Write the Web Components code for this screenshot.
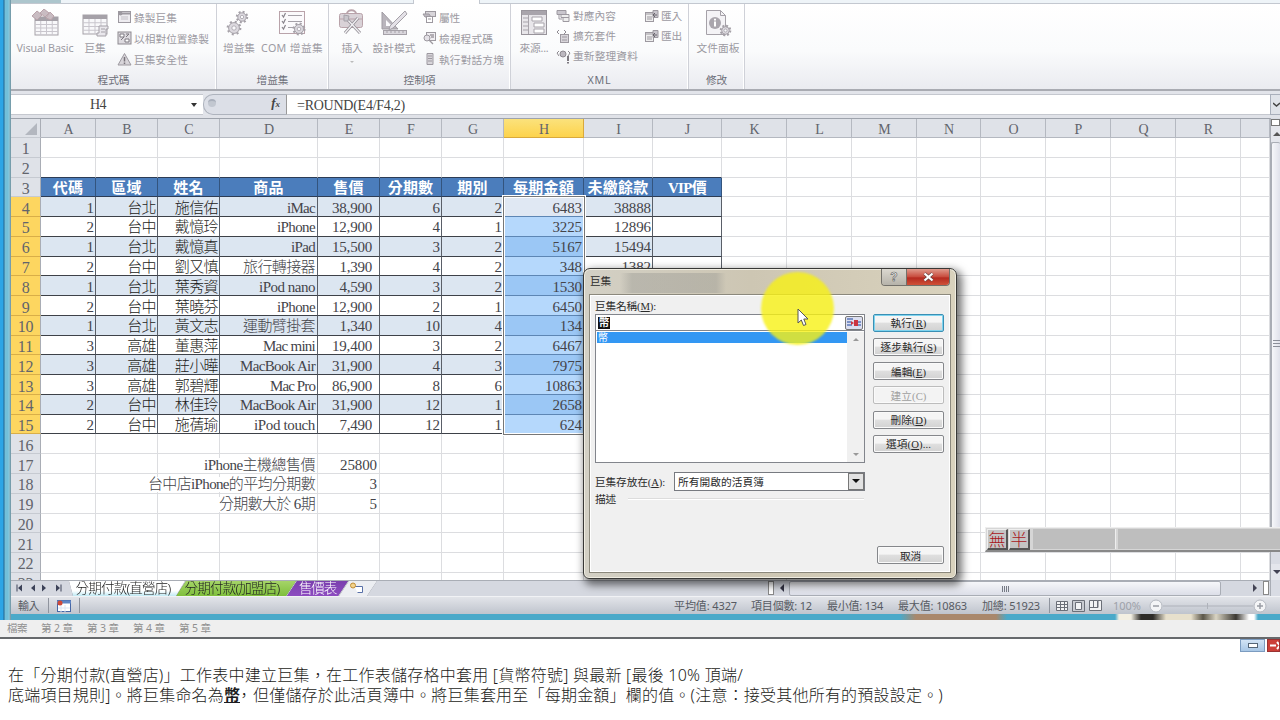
<!DOCTYPE html>
<html lang="zh-Hant">
<head>
<meta charset="utf-8">
<title>巨集</title>
<style>
html,body{margin:0;width:1280px;height:720px;overflow:hidden;background:#fff}
body{font-family:"Noto Sans","Noto Sans CJK TC",sans-serif}
</style>
</head>
<body>
<app-desktop></app-desktop>
<script>
const fits = [];
const define = (name, css, render) => customElements.define(name, class extends HTMLElement {
  constructor() {
    super();
    this.attachShadow({ mode: 'open' });
  }
  connectedCallback() {
    if (this.done) return;
    this.done = true;
    this.shadowRoot.innerHTML = `<style>*{box-sizing:border-box}:host{box-sizing:border-box}${css}</style>${render(this)}`;
  }
});

/* Text set to a given width by tracking */
customElements.define('fit-text', class extends HTMLElement {
  constructor() {
    super();
    this.attachShadow({ mode: 'open' }).innerHTML =
      '<style>:host{display:inline-block;white-space:pre;flex:none}span{display:inline-block;white-space:pre}</style><span><slot></slot></span>';
  }
  connectedCallback() { fits.push(this); }
  fit() {
    const w = +this.getAttribute('w');
    const n = [...this.textContent].length;
    const s = this.shadowRoot.querySelector('span');
    const nat = s.getBoundingClientRect().width;
    if (w && n) {
      s.style.letterSpacing = ((w - nat) / n) + 'px';
      this.style.width = w + 'px';
    }
  }
});
const T = (s, w, x = '') => `<fit-text w="${w}" style="${x}">${s}</fit-text>`;

/* ---------- icons ---------- */
const G = '#a5a1a8', L = '#e9e7ec', P = '#b9a3aa';
const gear = (x, y, r) => `<circle cx="${x}" cy="${y}" r="${r}" fill="#dcd9df" stroke="${G}" stroke-width="1"/><circle cx="${x}" cy="${y}" r="${r + 1}" fill="none" stroke="${G}" stroke-width="2" stroke-dasharray="2 ${(2 * Math.PI * (r + 1) / 8 - 2).toFixed(2)}"/><circle cx="${x}" cy="${y}" r="${r * .4}" fill="#fafafc" stroke="${G}" stroke-width=".8"/>`;
const grid = (x, y, w, h) => {
  let s = `<rect x="${x}" y="${y}" width="${w}" height="${h}" fill="#f8f8fa" stroke="${G}"/><rect x="${x}" y="${y}" width="${w}" height="4" fill="${G}"/>`;
  for (let i = 1; i < 4; i++) s += `<path d="M${x} ${y + 4 + i * (h - 4) / 4}h${w}M${x + i * w / 4} ${y + 4}v${h - 4}" stroke="#c9c6cd" fill="none"/>`;
  return s;
};
const ICON = {
  vb: grid(4, 8, 23, 18) + `<path d="M1 7l5-5 5 4-5 5zM9 4l4-4 5 4-4 4zM15 9l4-6 4 4-3 4z" fill="#c9bcc2" stroke="${P}"/>`,
  macro: grid(2, 6, 24, 19) + `<path d="M18 17h9v3h-2v7h-9v-3h2z" fill="${L}" stroke="${G}"/><path d="M20 20h4M20 23h4" stroke="${G}"/>`,
  gears: gear(17, 8, 4.2) + gear(9, 19, 5.4),
  com: `<rect x="1.500" y="2.500" width="25" height="22" fill="#fbfafc" stroke="${P}"/><path d="M10 6.500h14M10 12.500h14M10 18.500h8" stroke="${G}"/><path d="M4 6l1.500 2 2-4M4 12l1.500 2 2-4M4 18l1.500 2 2-4" stroke="#88848c" fill="none" stroke-width="1.200"/>` + gear(21, 20, 4.5),
  insert: `<path d="M9 5c0-5 9-5 9 0" fill="none" stroke="${P}" stroke-width="2"/><rect x="1.500" y="4.500" width="23" height="14" rx="2" fill="#d9d2d7" stroke="${P}"/><path d="M2 10h22" stroke="${P}"/><path d="M8 9l14 15M20 9L7 24" stroke="#97939a" stroke-width="3"/><path d="M8 9l14 15M20 9L7 24" stroke="#f3f2f5" stroke-width="1.200"/><path d="M6 6l5 1-1 5-4 0z" fill="#c8c5cb" stroke="${G}"/>`,
  design: `<path d="M2 3v17h16z" fill="#b9b5bc" stroke="#a09ca3"/><path d="M6 11v6h6z" fill="#fafafc"/><path d="M25 2l2 3-14 14-4 2 1-4z" fill="#e4e1e7" stroke="${G}"/><rect x="3.500" y="21.500" width="23" height="4" fill="#d9d6dc" stroke="${G}"/><path d="M7 22v2M11 22v2M15 22v2M19 22v2M23 22v2" stroke="${G}"/>`,
  source: `<rect x="1.500" y="1.500" width="25" height="24" fill="#e8e6ea" stroke="#98949b"/><rect x="2" y="2" width="24" height="4" fill="#a8a4ab"/><path d="M8.500 6v19M3 9h5M3 13h5M3 17h5M3 21h5" stroke="#a8a4ab"/><path d="M12 8h10v4H12zM14 14h10v4H14zM14 20h10v4H14z" fill="#fff" stroke="#a8a4ab"/>`,
  doc: `<path d="M2.500 1.500h14l5 5v19h-19z" fill="#f4f3f6" stroke="${G}"/><path d="M16.500 1.500v5h5" fill="none" stroke="${G}"/><circle cx="11" cy="14" r="6" fill="#aaa6ad"/><path d="M11 12.500v5M11 9.800v1.600" stroke="#fff" stroke-width="2"/>` + gear(21.500, 21.500, 3.800),
  rec: `<rect x="1.500" y="1.500" width="12" height="11" fill="#eeecf0" stroke="#9d99a0"/><path d="M2 3.500h11" stroke="#9d99a0" stroke-width="2"/><path d="M4 7h7M4 9h7" stroke="#c3c0c7"/><circle cx="3.500" cy="3.500" r="2" fill="#9d99a0"/>`,
  rel: `<rect x="1" y="1" width="13" height="12" fill="#dddadf" stroke="#8d8990"/><path d="M3 3h4v3H3zM8 8h4v3H8zM9 3h3M4 9l3-3M9 6l3-3" stroke="#7d7980" fill="#fff"/>`,
  warn: `<path d="M7.500 1.500l6.500 11.500H1z" fill="#d8d5da" stroke="#9d99a0"/><path d="M7.500 5v4.500M7.500 10.500v1.500" stroke="#77737a" stroke-width="1.500"/>`,
  prop: `<rect x="3.500" y="1.500" width="10" height="5" fill="#d8d5da" stroke="#9d99a0"/><path d="M1 4h6l2 3H3z" fill="#bcb8c0" stroke="#9d99a0"/><rect x="4.500" y="6.500" width="6" height="6" fill="#fff" stroke="#9d99a0"/><path d="M6 9h3" stroke="#9d99a0"/>`,
  view: `<rect x="4.500" y="1.500" width="9" height="8" fill="#f0eef2" stroke="#9d99a0"/><circle cx="5" cy="7" r="3" fill="#e4e1e7" stroke="#9d99a0"/><path d="M7 9l4 4M8 4h4M9 6h3" stroke="#9d99a0" stroke-width="1.300"/>`,
  run: `<path d="M5 1.500h6v11H5z" fill="#d8d5da" stroke="#9d99a0"/><path d="M6 4h4M6 6.500h4M6 9h4" stroke="#9d99a0"/>`,
  map: `<path d="M1 1.500h9v4H1z" fill="#c9c6cd" stroke="#9d99a0"/><path d="M5 5.500h8v3H5zM7 8.500h6v4H7z" fill="#eee" stroke="#9d99a0"/><path d="M3 6v4h3" fill="none" stroke="#9d99a0"/>`,
  ext: `<path d="M3 1L1 3l2 2M8 1l2 2-2 2" fill="none" stroke="#8d8990"/><rect x="4.500" y="5.500" width="8" height="8" fill="#d8d5da" stroke="#9d99a0"/><path d="M6 8h5M6 11h5" stroke="#9d99a0"/>`,
  refr: `<path d="M3 2L1 4l2 3M12 2l2 2-2 3" fill="none" stroke="#8d8990"/><circle cx="7" cy="5" r="3" fill="#bcb8c0" stroke="#8d8990"/><path d="M12 7v5M12 13v1.500" stroke="#7d7980" stroke-width="2"/>`,
  imp: `<rect x="1.500" y="3.500" width="8" height="9" fill="#eee" stroke="#9d99a0"/><path d="M2 5h7M3 8h5M3 10h5" stroke="#9d99a0"/><path d="M9 1.500h5v7H9z" fill="#c9c6cd" stroke="#9d99a0"/><path d="M10 6l3 0M11 4l-2 2 2 2" fill="none" stroke="#66626a"/>`
};
const I = (n, w, x = '') => `<svg width="${w}" height="${w}" viewBox="0 0 ${n === 'imp' || w > 20 ? w : w} ${w}" style="${x}">${ICON[n]}</svg>`;

/* ---------- ribbon ---------- */
define('big-button',
  `:host{display:flex;flex-direction:column;align-items:center;width:var(--w);flex:none;padding-top:5px;color:#9c9aa2;font-size:10.7px;line-height:16px}
   svg{display:block;margin-bottom:3px}i{width:0;height:0;border:2.500px solid transparent;border-top-color:#bbb;margin-top:5px}`,
  e => `${I(e.getAttribute('icon'), 28)}${T(e.getAttribute('label'), e.getAttribute('w'))}${e.hasAttribute('menu') ? '<i></i>' : ''}`);
define('small-button',
  `:host{display:flex;align-items:center;height:var(--h,21px);color:#9c9aa2;font-size:10.7px;line-height:16px}svg{margin-right:2px;flex:none}`,
  e => `${I(e.getAttribute('icon'), 15)}${T(e.getAttribute('label'), e.getAttribute('w'))}`);
define('ribbon-group',
  `:host{display:flex;flex-direction:column;width:var(--w);height:85px;flex:none;border-right:1px solid #cfd1d8;box-shadow:inset -1px 0 #fff}
   .b{display:flex;height:68px;flex:none}.l{text-align:center;font-size:10.7px;line-height:16px;color:#6c6e78;display:flex;justify-content:center}`,
  e => `<div class="b"><slot></slot></div><div class="l">${T(e.getAttribute('label'), e.getAttribute('w'))}</div>`);
const big = (i, l, w, W, m = 0, x = '') => `<big-button icon="${i}" label="${l}" w="${w}" ${x} style="--w:${W}px;margin-left:${m}px"></big-button>`;
const sm = (i, l, w) => `<small-button icon="${i}" label="${l}" w="${w}"></small-button>`;
define('ribbon-bar',
  `:host{display:block;height:89px;flex:none}
   .tabs{display:flex;height:4px;background:#eef4f8;border-bottom:1px solid #c3c8d0}.f{width:50px;background:#adc6cd}.a{margin-left:352px;width:67px;background:#fff;border:1px solid #c3c8d0;border-width:0 1px;margin-bottom:-1px}
   .g{display:flex;height:85px;background:linear-gradient(#fff,#fafbfc 55%,#eaebf0)}
   .c{display:flex;flex-direction:column}`,
  () => `<div class="tabs"><div class="f"></div><div class="a"></div></div><div class="g">
  <ribbon-group label="程式碼" w="32" style="--w:206px">${big('vb', 'Visual Basic', 57, 60, 4)}${big('macro', '巨集', 21, 30, 5)}<div class="c" style="margin:3px 0 0 7px">${sm('rec', '錄製巨集', 43)}${sm('rel', '以相對位置錄製', 75)}${sm('warn', '巨集安全性', 54)}</div></ribbon-group>
  <ribbon-group label="增益集" w="32" style="--w:112px">${big('gears', '增益集', 32, 36, 4)}${big('com', 'COM 增益集', 62, 64, 3)}</ribbon-group>
  <ribbon-group label="控制項" w="32" style="--w:182px">${big('insert', '插入', 21, 30, 8, 'menu')}${big('design', '設計模式', 43, 44, 5)}<div class="c" style="margin:3px 0 0 6px">${sm('prop', '屬性', 21)}${sm('view', '檢視程式碼', 54)}${sm('run', '執行對話方塊', 65)}</div></ribbon-group>
  <ribbon-group label="XML" w="24" style="--w:178px">${big('source', '來源...', 29, 32, 7)}<div class="c" style="margin:2px 0 0 6px;--h:20px">${sm('map', '對應內容', 43)}${sm('ext', '擴充套件', 43)}${sm('refr', '重新整理資料', 65)}</div><div class="c" style="margin:2px 0 0 6px;--h:20px">${sm('imp', '匯入', 21)}${sm('imp', '匯出', 21)}</div></ribbon-group>
  <ribbon-group label="修改" w="21" style="--w:56px">${big('doc', '文件面板', 43, 44, 7)}</ribbon-group></div>`);

/* ---------- formula bar ---------- */
define('formula-bar',
  `:host{display:flex;height:29px;flex:none;border-top:2px solid #a9abb2;border-bottom:3px solid #e0e2e8;padding-top:3px;background:#e2e4ea;font:14px "Liberation Serif","Noto Sans CJK TC",serif;color:#444}
   .n{width:192px;background:#fff;display:flex;align-items:center;padding-left:79px;border-top:1px solid #c5c8cf;border-bottom:1px solid #c5c8cf}
   .n i{border:3px solid transparent;border-top:4px solid #333;margin:4px 0 0 85px}
   .m{width:84px;background:#dcdfe7;border-radius:10px 0 0 10px;border:1px solid #aeb3bd;border-right-color:#999;display:flex;align-items:center;justify-content:space-between;padding:0 6px 3px 4px;font:italic bold 13px "Liberation Serif",serif}
   .m b{width:8px;height:8px;border-radius:50%;background:#c2c7d0;border-top:2px solid #a9afbb}
   small{font-size:9px}.v{flex:1;background:#fff;border-top:1px solid #c5c8cf;border-bottom:1px solid #c5c8cf;padding-left:10px;line-height:21px}
   .e{width:10px;background:#e0e3e9;border:1px solid #a9afbb;border-right:0;overflow:hidden}svg{display:block;margin:7px 0 0 2px}`,
  () => `<div class="n">${T('H4', 16)}<i></i></div><div class="m"><b></b><span>f<small>x</small></span></div><div class="v">${T('=ROUND(E4/F4,2)', 108)}</div><div class="e"><svg width="8" height="6"><path d="M0 1l3.500 3L7 1" fill="none" stroke="#444" stroke-width="1.500"/></svg></div>`);

/* ---------- worksheet ---------- */
const EDGE = [11, 41, 96, 158, 220, 318, 380, 442, 504, 584, 653, 722, 787, 852, 917, 981, 1046, 1111, 1176, 1241, 1270];
const COLS = EDGE.slice(1).map((x, i) => (x - EDGE[i]) + 'px').join(' ');
const NAMES = ['iMac', 'iPhone', 'iPad', '旅行轉接器', 'iPod nano', 'iPhone', '運動臂掛套', 'Mac mini', 'MacBook Air', 'Mac Pro', 'MacBook Air', 'iPod touch'];
const NW = [28, 38, 24, 72, 56, 38, 72, 52, 75, 45, 75, 61];
const DATA = [
  [1, '台北', '施信佑', '38,900', 6, 2, 6483, 38888], [2, '台中', '戴憶玲', '12,900', 4, 1, 3225, 12896],
  [1, '台北', '戴憶真', '15,500', 3, 2, 5167, 15494], [2, '台中', '劉又慎', '1,390', 4, 2, 348, 1382],
  [1, '台北', '葉秀資', '4,590', 3, 2, 1530, ''], [2, '台中', '葉曉芬', '12,900', 2, 1, 6450, ''],
  [1, '台北', '黃文志', '1,340', 10, 4, 134, ''], [3, '高雄', '董惠萍', '19,400', 3, 2, 6467, ''],
  [3, '高雄', '莊小曄', '31,900', 4, 3, 7975, ''], [3, '高雄', '郭碧輝', '86,900', 8, 6, 10863, ''],
  [2, '台中', '林佳玲', '31,900', 12, 1, 2658, ''], [2, '台中', '施蒨瑜', '7,490', 12, 1, 624, '']];
const num = v => v === '' ? '' : T(v, String(v).replace(',', '').length * 7.4 + (String(v).includes(',') ? 3 : 0));
const cjk = v => T(v, v.length * 14.4, 'color:#1c1c20');
const row = (n, cells, cls = '') => {
  let s = `<div class="r ${cls}"><div class="h">${n === '' ? '' : T(n, String(n).length * 7.7)}</div>`;
  for (let i = 0; i < 19; i++) s += `<div class="c c${i}">${cells[i] || ''}</div>`;
  return s + '</div>';
};
define('work-sheet',
  `:host{display:block;height:462px;width:1259px;flex:none;overflow:hidden;position:relative;font:15px/19px "Liberation Serif","Noto Sans CJK TC",serif;font-weight:300;color:#44444a;background:#fff}
   .r{display:grid;grid-template-columns:${COLS};grid-template-rows:100%;height:19.780px}
   .c{border-right:1px solid #dcdde0;border-bottom:1px solid #dcdde0;display:flex;justify-content:flex-end;align-items:center;padding:3px 1px 0 0;overflow:hidden;white-space:nowrap;min-width:0}
   .h{background:#dfe2e8;border-right:1px solid #a9adb5;border-bottom:1px solid #c6cad1;display:flex;justify-content:center;align-items:center;color:#62646c;font-size:16px;padding-top:3px}
   .top{height:20px;border-top:1px solid #9ea3ac}.top .c{background:#dfe2e8;border-color:#b4b8c0;justify-content:center;color:#62646c;font-size:14px;padding:3px 0 0 1px}
   .top .c7{background:linear-gradient(#fbe27c,#fdd34c);border-color:#d9a93c}
   .top .h{justify-content:flex-end;align-items:flex-end;padding:0 3px 2px 0}
   .r2 .c:nth-child(-n+11){border-bottom-color:#2c3c55}
   .head .c:nth-child(-n+11){background:#4b7dbc;color:#fff;font-weight:700;justify-content:center;border-right-color:#33547e;border-bottom-color:#2c3c55;padding-right:0}
   .sel .h{background:#fdd660;border-bottom-color:#d9ae48}
   .sel .c:nth-child(-n+11){border-right-color:#5a5f68;border-bottom-color:#3d4148}
   .odd .c:nth-child(-n+11){background:#dce6f1}
   .sel .c.c4,.note .c.c4{padding-right:7px}.note .c.c4{padding-right:2px}.sel .c.c7{background:#b5d8fc;border-bottom-color:#5d86b4}.odd .c7.c7.c7.c7{background:#9bc7f5}.first .c7.c7.c7.c7.c7{background:#e0e8f3}
   .note .c1,.note .c2{overflow:visible}.note .c3{overflow:visible;position:relative}.note .c3 fit-text{background:#fff;line-height:15px}
   .mark{position:absolute;left:492px;top:78px;width:82px;height:239px;border:1px solid #777;outline:1px solid #fff;box-shadow:inset 0 0 0 1px #fff}
   .c3{padding-right:2px}`,
  () => {
    let s = `<div class="r top"><div class="h"><svg width="12" height="12"><path d="M12 0v12H0z" fill="#b3b7bf"/></svg></div>`;
    'ABCDEFGHIJKLMNOPQR'.split('').forEach((c, i) => s += `<div class="c c${i}">${c}</div>`);
    s += '<div class="c"></div></div>' + row(1, []) + row(2, [], 'r2');
    const H = ['代碼', '區域', '姓名', '商品', '售價', '分期數', '期別', '每期金額', '未繳餘款', 'VIP價'];
    s += row(3, H.map(v => T(v, v === 'VIP價' ? 38 : v.length * 15.2)), 'head');
    DATA.forEach((d, i) => s += row(i + 4, [num(d[0]), cjk(d[1]), cjk(d[2]), T(NAMES[i], NW[i]), num(d[3]), num(d[4]), num(d[5]), num(d[6]), num(d[7])], 'sel ' + (i % 2 ? '' : 'odd ') + (i ? '' : 'first')));
    s += row(16, []);
    s += row(17, [, , , T('iPhone主機總售價', 111), num(25800)], 'note');
    s += row(18, [, , , T('台中店iPhone的平均分期數', 167), num(3)], 'note');
    s += row(19, [, , , T('分期數大於 6期', 96), num(5)], 'note');
    for (let n = 20; n < 24; n++) s += row(n, []);
    return s + '<div class="mark"></div>';
  });
define('v-scroll',
  `:host{display:flex;flex-direction:column;width:10px;height:478px;background:#d9dce4;border-left:1px solid #a9adb5;overflow:hidden}
   .s{height:7px;border:1px solid #777;background:#fff;margin:1px 0 0 0;flex:none}.a{height:16px;flex:none;background:#e4e6ec;display:flex;align-items:center}
   .t{height:402px;flex:none;border:1px solid #a9adb5;border-right:0;border-radius:2px;background:linear-gradient(90deg,#f6f7fa,#dfe1ea);display:flex;align-items:center}
   .t i{width:8px;height:7px;margin-left:1px;background:repeating-linear-gradient(#8b8f99 0 1px,transparent 1px 3px)}.d{margin-top:20px}`,
  () => `<div class="s"></div><div class="a"><svg width="10" height="6"><path d="M2 5l4-4 4 4z" fill="#555"/></svg></div><div class="t"><i></i></div><div class="a d"><svg width="10" height="6"><path d="M2 1l4 4 4-4z" fill="#445"/></svg></div>`);

/* ---------- sheet tabs and status ---------- */
define('sheet-tab',
  `:host{display:flex;justify-content:center;align-items:center;height:15px;width:var(--w);margin-left:-9px;flex:none;font-size:13.500px;font-weight:300;line-height:14px;color:#222;filter:drop-shadow(0 0 .5px #667);position:relative;z-index:var(--z,0)}
   div{display:flex;justify-content:center;width:100%;height:15px;padding-right:var(--s,8px);background:var(--bg);clip-path:polygon(10px 0,100% 0,calc(100% - 10px) 100%,0 100%)}:host([first]) div{clip-path:polygon(0 0,100% 0,calc(100% - 9px) 100%,4px 100%)}:host([first]){margin-left:0}`,
  () => `<div><slot></slot></div>`);
define('tabs-bar',
  `:host{display:flex;width:1259px;height:16px;flex:none;background:#d5d8e0;border-top:1px solid #a9adb5;overflow:hidden}
   .nav{width:58px;flex:none}svg{display:block;flex:none}.hs{display:flex;margin-left:auto;width:502px}.sp{width:6px;height:14px;border:1px solid #888;background:#fff;flex:none}
   .a{width:15px;display:flex;justify-content:center;align-items:center}.th{width:432px;border:1px solid #a9adb5;border-radius:2px;background:linear-gradient(#f6f7fa,#dcdee8);display:flex;justify-content:center;align-items:center}
   .th i{width:7px;height:6px;background:repeating-linear-gradient(90deg,#777b86 0 1px,transparent 1px 2px)}`,
  () => `<svg class="nav" width="58" height="15"><path d="M11 3.500l-4 3.500 4 3.500zM24 3.500l-4 3.500 4 3.500zM31 3.500l4 3.500-4 3.500zM45 3.500l4 3.500-4 3.500z" fill="#3c4258"/><path d="M6 3.500v7M50 3.500v7" stroke="#3c4258"/></svg>
   <sheet-tab first style="--w:116px;--z:2;--bg:linear-gradient(#fff 65%,#bfe9f4)">${T('分期付款(直營店)', 95)}</sheet-tab>
   <sheet-tab style="--w:120px;--z:1;--bg:linear-gradient(#a5d468,#7fbf3c)">${T('分期付款(加盟店)', 95)}</sheet-tab>
   <sheet-tab style="--w:61px;--s:0px;--bg:linear-gradient(#7a3fae,#8d4cc0);color:#fff">${T('售價表', 37)}</sheet-tab>
   <sheet-tab style="--w:38px;--s:0px;--bg:#eceef2"><svg width="18" height="15"><path d="M5.500 5.500h8v6h-5" fill="#fff" stroke="#5870a8"/><circle cx="4" cy="4.500" r="2.500" fill="#f1d28c" stroke="#c28e36"/></svg></sheet-tab>
   <div class="hs"><div class="sp"></div><div class="a"><svg width="6" height="9"><path d="M5 0v8L1 4z" fill="#334"/></svg></div><div class="th"><i></i></div><div class="a" style="margin-left:26px;width:16px"><svg width="6" height="9"><path d="M1 0v8l4-4z" fill="#445"/></svg></div><div class="sp"></div></div>`);
define('status-bar',
  `:host{display:flex;align-items:center;height:18px;flex:none;background:linear-gradient(#e2e4e9,#bfc4cd);border-top:1px solid #f1f2f5;font-size:11px;line-height:16px;color:#565a62}
   u{width:1px;height:15px;background:#8f949e;flex:none}svg{flex:none}`,
  () => `${T('輸入', 21, 'margin-left:7px')}<u style="margin-left:9px"></u>
   <svg style="margin-left:8px" width="14" height="12"><rect x=".5" y=".5" width="13" height="11" fill="#fff" stroke="#4667a5"/><path d="M0 2h14" stroke="#5e85c4" stroke-width="3"/><path d="M4 5v7M8 5v7M1 8h12" stroke="#dbe4f2"/><circle cx="3" cy="3" r="2.500" fill="#cf4a3a"/></svg><u style="margin-left:8px"></u>
   ${T('平均值: 4327', 63, 'margin-left:594px')}${T('項目個數: 12', 61, 'margin-left:14px')}${T('最小值: 134', 56, 'margin-left:15px')}${T('最大值: 10863', 69, 'margin-left:15px')}${T('加總: 51923', 58, 'margin-left:15px')}<u style="margin-left:9px"></u>
   <svg style="margin-left:6px" width="47" height="12"><g fill="#f2f3f5" stroke="#6b6f78"><path d="M.5 1.500h11v9H.5zM.5 4.500h11M.5 7.500h11M4.500 1.500v9M8.500 1.500v9"/><path d="M16.500.5h12v11h-12z" fill="#c9ccd2"/><path d="M19.500 2.500h6v7h-6z"/><path d="M33.500.5h12v10h-12z"/><path d="M37.500 1v6M41.500 1v6M34 7.500h8v-7"/></g></svg>
   ${T('100%', 28, 'margin-left:10px;color:#9da1a9')}
   <svg style="margin-left:8px" width="130" height="14"><path d="M14 7h90M58.500 4v6" stroke="#aeb2ba"/><g fill="#f4f5f7" stroke="#b5b9c1"><circle cx="7" cy="7" r="6"/><circle cx="111" cy="7" r="6"/></g><path d="M4 7h6M108 7h6M111 4v6" stroke="#999da5" stroke-width="1.500"/></svg>`);

/* ---------- macro dialog ---------- */
define('dlg-button',
  `:host{display:flex;align-items:center;justify-content:center;width:71px;height:18px;flex:none;border:1px solid #85878b;border-radius:2px;background:linear-gradient(#f5f5f5 45%,#dfdfdf 50%,#d2d2d2);box-shadow:inset 0 0 0 1px #fafafa;padding-top:1px}
   :host([primary]){border-color:#3a8fb4;box-shadow:inset 0 0 0 1px #7fd4ef}:host([off]){background:#f3f3f3;border-color:#bcbcbc;color:#a0a0a0}`,
  () => `<slot></slot>`);
define('macro-dialog',
  `:host{display:flex;flex-direction:column;position:absolute;left:583px;top:268px;width:374px;height:311px;padding:0 6px;border:1px solid #383836;border-radius:7px 7px 6px 6px;box-shadow:3px 4px 9px 2px rgba(0,0,0,.55),inset 0 0 0 1px #f0ede2;background:linear-gradient(90deg,transparent 36px,rgba(150,150,145,.4) 48px 132px,transparent 142px) 0 4px/100% 20px no-repeat,linear-gradient(90deg,#d3d0c5,#cdc6b3 45%,#d9d2bd);font:10.7px/14px "Liberation Serif","Noto Sans CJK TC",serif;color:#2a2a2a}
   .t{display:flex;height:26px;flex:none;align-items:flex-start}.t fit-text{margin-top:5px}
   .q{display:flex;margin-left:auto;border:1px solid #73716b;border-top:0;border-radius:0 0 4px 4px;height:17px;overflow:hidden}
   .q b{width:25px;text-align:center;font:bold 12px/16px "Liberation Sans",sans-serif;background:linear-gradient(#dbd8d0,#b6b3aa);color:#fff;-webkit-text-stroke:.6px #555;border-right:1px solid #73716b}.q b+b{width:42px;background:linear-gradient(#e09a8c,#c84a3c 50%,#b52a20 55%,#cf5138);border:0}
   .q svg{display:block;margin:3px auto}
   .c{flex:none;height:277px;background:#f0f0f0;border:1px solid #fff;outline:1px solid #8b887c;padding:3px 5px 4px 4px;display:grid;grid-template-columns:270px 71px;column-gap:8px;align-content:start}
   .l{display:flex;flex-direction:column}.box{margin-top:1px;border:1px solid #82858c;background:#fff;height:149px;flex:none}
   .in{display:flex;height:16px;border-bottom:1px solid #82858c;padding:1px 1px 0 2px;justify-content:space-between}
   .in span{background:#111;color:#fff;font-weight:700;width:12px;height:12px;line-height:12px;text-align:center;font-size:10.5px;margin-top:1px}
   .in i{width:18px;height:14px;border:1px solid #777;border-radius:2px;background:#dcdff0;display:block}
   .ls{display:flex;height:131px;padding:1px 0 0 1px}.it{flex:1}.it p{margin:0;height:11px;background:#3397f3;color:#fff;line-height:11px;font-size:10px;padding-left:1px}
   .sb{width:17px;background:#f0f0f0;display:flex;flex-direction:column;justify-content:space-between;align-items:center;padding:5px 0}
   .r{display:flex;flex-direction:column;gap:6.300px;padding-top:14.500px}
   .cb{display:flex;align-items:center;margin-top:9px;height:19px}.cb .v{display:flex;margin-left:9px;width:191px;height:19px;border:1px solid #777a80;background:#fff;align-items:center;justify-content:space-between;padding-left:3px}
   .dd{width:16px;height:17px;border:1px solid #777;background:#e2e2e2;display:flex;align-items:center;justify-content:center}
   .ds{display:flex;align-items:center;margin-top:1px}.ds hr{width:236px;margin:0 0 0 12px;border:0;border-top:1px solid #dcdcdc;border-bottom:1px solid #fff}
   .x{grid-column:1/3;display:flex;justify-content:flex-end;margin-top:40px}.x dlg-button{width:67px}`,
  () => `<div class="t">${T('巨集', 21)}<div class="q"><b>?</b><b><svg width="11" height="10"><path d="M1.500 1.500l8 7M9.500 1.500l-8 7" stroke="#644" stroke-width="3.600"/><path d="M1.500 1.500l8 7M9.500 1.500l-8 7" stroke="#fff" stroke-width="2.300"/></svg></b></div></div>
   <div class="c"><div class="l"><div style="height:14px;line-height:14px">${T('巨集名稱(<u>M</u>):', 61)}</div><div class="box"><div class="in"><span>幣</span><i><svg width="16" height="12"><path d="M1 2h6M1 5h4M1 8h5M10 5h5M11 8h4" stroke="#5b78b8" stroke-width="1.500"/><path d="M5 4l3 2-3 2M8 3h4v6H8z" fill="#cc3340"/></svg></i></div>
   <div class="ls"><div class="it"><p>幣</p></div><div class="sb"><svg width="8" height="5"><path d="M1 4l3-3 3 3z" fill="#999"/></svg><svg width="8" height="5"><path d="M1 1l3 3 3-3z" fill="#999"/></svg></div></div></div>
   <div class="cb">${T('巨集存放在(<u>A</u>):', 70)}<div class="v">${T('所有開啟的活頁簿', 86)}<div class="dd"><svg width="8" height="5"><path d="M0 0h8L4 4z" fill="#111"/></svg></div></div></div>
   <div class="ds">${T('描述', 21)}<hr></div></div>
   <div class="r"><dlg-button primary>${T('執行(<u>R</u>)', 36)}</dlg-button><dlg-button>${T('逐步執行(<u>S</u>)', 56)}</dlg-button><dlg-button>${T('編輯(<u>E</u>)', 35)}</dlg-button><dlg-button off>${T('建立(C)', 36)}</dlg-button><dlg-button>${T('刪除(<u>D</u>)', 36)}</dlg-button><dlg-button>${T('選項(<u>O</u>)...', 45)}</dlg-button></div>
   <div class="x"><dlg-button>${T('取消', 21)}</dlg-button></div></div>`);
define('pointer-halo',
  `:host{position:absolute;left:761px;top:272px;width:73px;height:73px;border-radius:50%;background:rgba(247,241,20,.8);filter:blur(.8px)}`, () => '');
define('mouse-pointer',
  `:host{display:block;position:absolute;left:797px;top:308px}svg{display:block}`,
  () => `<svg width="13" height="19"><path d="M1 1v14l3.300-3 2.200 5.500 2.500-1L6.800 11H11z" fill="#fff" stroke="#555"/></svg>`);
define('ime-bar',
  `:host{display:flex;position:absolute;left:985px;top:527px;width:295px;height:25px;background:#d6d6d6;border-bottom:2px solid #888;border-top:1px solid #eee;border-left:1px solid #eee;padding:1px 0 0 1px;font:17px/18px "Noto Sans CJK TC",sans-serif;font-weight:300;color:#a8161c}
   b{font-weight:inherit;width:21px;height:21px;display:flex;justify-content:center;align-items:center;background:#c4c4c4;border:1px solid #eee;border-right:2px solid #555;border-bottom:2px solid #555;flex:none;margin-right:1px}
   i{height:20px;background:#bebebe;flex:1}.a{flex:none;width:83px;border-right:1px solid #eee;margin:0 2px 0 2px}`,
  () => `<b>無</b><b>半</b><i class="a"></i><i></i>`);

/* ---------- instruction area ---------- */
define('chapter-strip',
  `:host{display:flex;align-items:center;height:19px;flex:none;background:#efefef;border-bottom:2px solid #66696c;padding-left:7px;gap:14px;font-size:10.500px;line-height:17px;color:#8f8f8f}`,
  () => T('檔案', 20) + [2, 3, 4, 5].map(n => T(`第 ${n} 章`, 32)).join(''));
define('task-text',
  `:host{display:block;flex:1;background:#fff;font-size:16px;line-height:20px;font-weight:300;color:#1c1c20}
   .w{display:flex;justify-content:flex-end;height:13px;gap:2px}.w b{width:25px;border:1px solid #7c9cc0;background:linear-gradient(#d3e4f5,#a8c7e6);display:flex;justify-content:center;align-items:center}.w b i{width:10px;height:5px;border:1px solid #567;background:#fff}
   .w b+b{width:13px;background:#cc4038;border-color:#933;overflow:hidden}p{margin:0 0 0 8px;display:flex;height:20px}p.a{margin-top:13px}u{font-weight:700}`,
  () => `<div class="w"><b><i></i></b><b><svg width="12" height="11"><path d="M2 5.500h6M9 2l6 7M15 2L9 9" stroke="#fff" stroke-width="2"/></svg></b></div>
   <p class="a">${T('在「分期付款(直營店)」工作表中建立巨集，在工作表儲存格中套用 [貨幣符號] 與最新 [最後 10% 頂端/', 735)}</p>
   <p>${T('底端項目規則]。將巨集命名為', 216)}${T('<u>幣</u>', 16)}${T('，', 16, 'margin-left:-4px')}${T('但僅儲存於此活頁簿中。將巨集套用至「每期金額」欄的值。(注意：接受其他所有的預設設定。)', 690, 'margin-left:1px')}</p>`);

define('app-desktop',
  `:host{display:flex;flex-direction:column;width:1280px;height:720px;position:relative;overflow:hidden;font-weight:400}
   .win{height:620px;flex:none;display:flex;flex-direction:column;padding-left:11px;background:linear-gradient(90deg,#2ca5e6 0 3px,#24648e 4px,#72bfd9 5px 8px,#8cc9dc 9px,#6f8f9c 11px,transparent 11px),#4aa9c9}
   .mid{display:flex;height:478px;flex:none}.body{width:1259px;display:flex;flex-direction:column}
   .edge{height:6px;background:linear-gradient(90deg,transparent 889px,#a9886c 905px 985px,transparent 996px 1104px,#f3efe2 1108px 1120px,#2e2c28 1130px 1142px,#e7e0cc 1155px 1180px,#5a5548 1192px,#d9d4c3 1205px,#3b3832 1225px,#fff 1238px 1243px,transparent 1247px)}`,
  () => `<div class="win"><ribbon-bar></ribbon-bar><formula-bar></formula-bar><div class="mid"><div class="body"><work-sheet></work-sheet><tabs-bar></tabs-bar></div><v-scroll></v-scroll></div><status-bar></status-bar><div class="edge"></div></div>
   <chapter-strip></chapter-strip><task-text></task-text>
   <macro-dialog></macro-dialog><pointer-halo></pointer-halo><mouse-pointer></mouse-pointer><ime-bar></ime-bar>`);

fits.forEach(f => f.fit());
</script>
</body>
</html>
